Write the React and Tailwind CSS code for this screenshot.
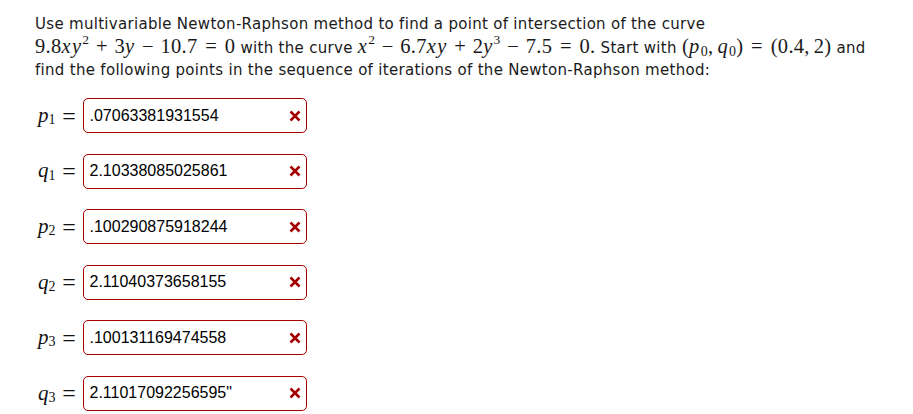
import React from 'react';

const mathFont = { fontFamily: '"Liberation Serif", "DejaVu Serif", serif' };

const M = ({ children }) => (
  <span className="text-[20.5px] leading-none" style={mathFont}>
    {children}
  </span>
);

const I = ({ children }) => <i className="pr-[1px]">{children}</i>;

const Sub = ({ children }) => (
  <span className="relative top-[3px] text-[14px] not-italic">{children}</span>
);

const Sup = ({ children }) => (
  <span className="relative -top-[9px] text-[13.5px] not-italic">{children}</span>
);

// binary operator and relation, spaced the way TeX spaces them
const Bin = ({ children }) => (
  <span className="mx-[0.222em] inline-block w-[0.778em] text-center">{children}</span>
);
const Rel = ({ children }) => (
  <span className="mx-[0.278em] inline-block w-[0.778em] text-center">{children}</span>
);

const XMark = () => (
  <svg width="12" height="12" viewBox="0 0 12 12" className="shrink-0">
    <path d="M1.5 1.5 L10.5 10.5 M10.5 1.5 L1.5 10.5" stroke="#a30000" strokeWidth="2.5" />
  </svg>
);

const rows = [
  ['p', '1', '.07063381931554'],
  ['q', '1', '2.10338085025861'],
  ['p', '2', '.100290875918244'],
  ['q', '2', '2.11040373658155'],
  ['p', '3', '.100131169474558'],
  ['q', '3', '2.11017092256595"'],
];

const AnswerRow = ({ v, n, value }) => (
  <div className="flex h-[35px] items-center">
    <span className="ml-[3px] flex items-center text-[#111]" style={mathFont}>
      <i className="text-[21px]">{v}</i>
      <span className="relative top-[4px] text-[14px]">{n}</span>
      <span className="ml-[5px] inline-block w-[17px] text-center text-[24px] leading-none">=</span>
    </span>
    <div className="ml-[5px] flex h-[35px] w-[224px] items-center justify-between rounded-[5px] border border-[#a80000] pl-[6px] pr-[5px]">
      <span className="text-[16px] text-black" style={{ fontFamily: '"Liberation Sans", Arial, sans-serif' }}>
        {value}
      </span>
      <XMark />
    </div>
  </div>
);

const App = () => {
  return (
    <div className="min-h-[414px] w-[913px] bg-white pl-[35px] pt-[13px]">
      <div
        className="text-[15px] leading-[23px] tracking-[0.3px] text-[#1a1a1a]"
        style={{ fontFamily: '"DejaVu Sans", Verdana, sans-serif' }}
      >
        <p className="h-[23px]">Use multivariable Newton-Raphson method to find a point of intersection of the curve</p>
        <p className="h-[23px] whitespace-nowrap">
          <M>
            9.8<I>x</I>
            <I>y</I>
            <Sup>2</Sup>
            <Bin>+</Bin>3<I>y</I>
            <Bin>−</Bin>10.7<Rel>=</Rel>0
          </M>{' '}
          with the curve{' '}
          <M>
            <I>x</I>
            <Sup>2</Sup>
            <Bin>−</Bin>6.7<I>x</I>
            <I>y</I>
            <Bin>+</Bin>2<I>y</I>
            <Sup>3</Sup>
            <Bin>−</Bin>7.5<Rel>=</Rel>0.
          </M>{' '}
          Start with{' '}
          <M>
            (<I>p</I>
            <Sub>0</Sub>,<span className="ml-[4px]" />
            <I>q</I>
            <Sub>0</Sub>)<Rel>=</Rel>(0.4,<span className="ml-[4px]" />2)
          </M>{' '}
          and
        </p>
        <p className="h-[23px]">find the following points in the sequence of iterations of the Newton-Raphson method:</p>
      </div>

      <div className="mt-[16px] flex flex-col gap-[20.6px]">
        {rows.map(([v, n, value]) => (
          <AnswerRow key={v + n} v={v} n={n} value={value} />
        ))}
      </div>
    </div>
  );
};

export default App;
